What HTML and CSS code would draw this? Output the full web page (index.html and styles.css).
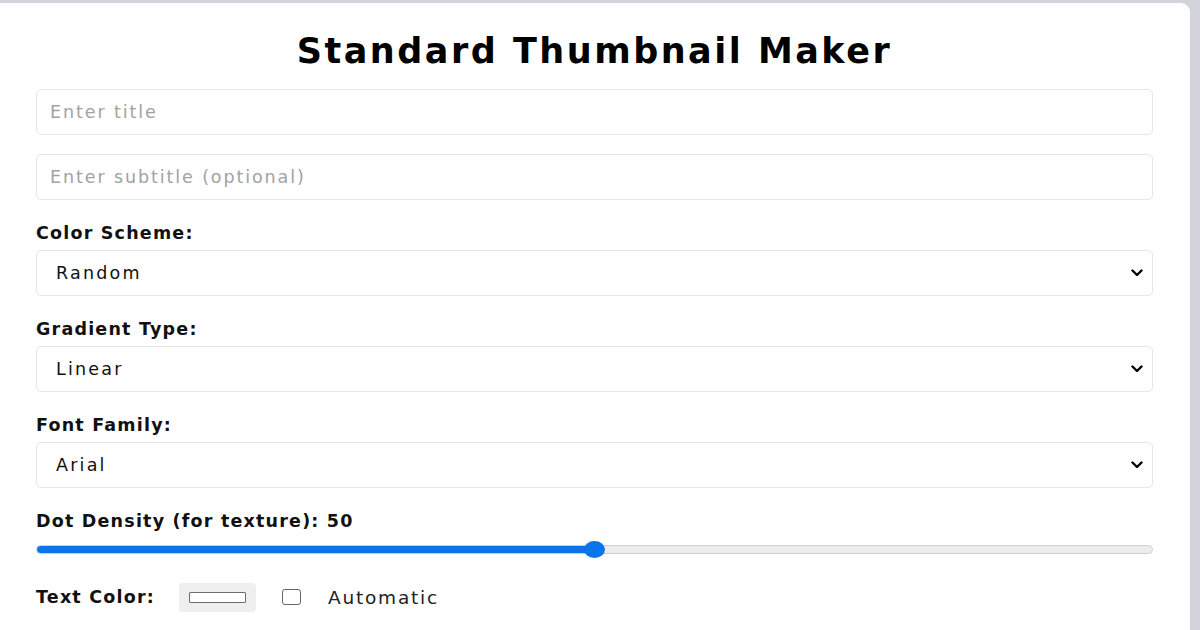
FILE: index.html
```html
<!DOCTYPE html>
<html lang="en">
<head>
<meta charset="utf-8">
<title>Standard Thumbnail Maker</title>
<link rel="stylesheet" href="styles.css">
</head>
<body>
<main class="card">
  <h1 class="title">Standard Thumbnail Maker</h1>
  <input class="text-input" type="text" placeholder="Enter title">
  <input class="text-input" type="text" placeholder="Enter subtitle (optional)">
  <div class="field">
    <label class="field-label" for="scheme">Color Scheme:</label>
    <div class="select-wrap">
      <select id="scheme" class="select"><option>Random</option></select>
      <svg class="chevron" viewBox="0 0 12 8" width="12" height="8"><path d="M1.5 1.5 6 6l4.5-4.5" fill="none" stroke="#000" stroke-width="2.4" stroke-linecap="round" stroke-linejoin="round"/></svg>
    </div>
  </div>
  <div class="field">
    <label class="field-label" for="gradient">Gradient Type:</label>
    <div class="select-wrap">
      <select id="gradient" class="select"><option>Linear</option></select>
      <svg class="chevron" viewBox="0 0 12 8" width="12" height="8"><path d="M1.5 1.5 6 6l4.5-4.5" fill="none" stroke="#000" stroke-width="2.4" stroke-linecap="round" stroke-linejoin="round"/></svg>
    </div>
  </div>
  <div class="field">
    <label class="field-label" for="font">Font Family:</label>
    <div class="select-wrap">
      <select id="font" class="select"><option>Arial</option></select>
      <svg class="chevron" viewBox="0 0 12 8" width="12" height="8"><path d="M1.5 1.5 6 6l4.5-4.5" fill="none" stroke="#000" stroke-width="2.4" stroke-linecap="round" stroke-linejoin="round"/></svg>
    </div>
  </div>
  <div class="field">
    <label class="field-label" for="density">Dot Density (for texture): 50</label>
    <input id="density" class="range" type="range" min="0" max="100" value="50">
  </div>
  <div class="color-row">
    <span class="field-label inline">Text Color:</span>
    <input class="color" type="color" value="#ffffff">
    <input id="auto" class="check" type="checkbox">
    <label class="check-label" for="auto">Automatic</label>
  </div>
</main>
</body>
</html>
```

FILE: styles.css
```css
* { box-sizing: border-box; }

html, body {
  margin: 0;
  height: 100%;
  overflow: hidden;
}

body {
  background: #d3d3db;
  font-family: "DejaVu Sans", "Open Sans", sans-serif;
  color: #111;
}

.card {
  margin: 3px 10px 0 0;
  width: 1190px;
  height: 640px;
  background: #fff;
  border-radius: 0 9px 0 0;
  padding: 29px 37px 0 36px;
  display: flex;
  flex-direction: column;
  gap: 19px;
}

.title {
  margin: 0;
  font-size: 35px;
  line-height: 38px;
  font-weight: 700;
  letter-spacing: 2.5px;
  text-align: center;
  color: #000;
}

.text-input {
  height: 46px;
  width: 100%;
  border: 1px solid #e6e6e6;
  border-radius: 5px;
  padding: 0 13px;
  font-family: inherit;
  font-size: 17.5px;
  letter-spacing: 1.9px;
  color: #111;
  outline: none;
}

.text-input::placeholder { color: #a2a2a2; }

.field {
  display: flex;
  flex-direction: column;
  gap: 5px;
}

.field-label {
  padding-top: 2px;
  font-size: 17.5px;
  line-height: 24px;
  font-weight: 600;
  letter-spacing: 1.2px;
  color: #111;
}

.select-wrap {
  position: relative;
}

.select {
  appearance: none;
  -webkit-appearance: none;
  width: 100%;
  height: 46px;
  border: 1px solid #e6e6e6;
  border-radius: 5px;
  background: #fff;
  padding: 0 40px 0 19px;
  font-family: inherit;
  font-size: 17.5px;
  letter-spacing: 2.2px;
  color: #111;
  outline: none;
}

.chevron {
  position: absolute;
  right: 10px;
  top: 19px;
  pointer-events: none;
}

.range {
  -webkit-appearance: none;
  appearance: none;
  width: 100%;
  height: 22px;
  margin: 0;
  background: transparent;
}

.range::-webkit-slider-runnable-track {
  height: 9px;
  border-radius: 5px;
  border: 1px solid #cfcfcf;
  background: linear-gradient(to right, #0c74ea 0%, #0c74ea 50%, #ececec 50%, #ececec 100%);
}

.range::-webkit-slider-thumb {
  -webkit-appearance: none;
  width: 21px;
  height: 17px;
  border-radius: 50%;
  background: #0c74ea;
  margin-top: -5px;
  border: none;
}

.color-row {
  display: flex;
  align-items: center;
  margin-top: 3px;
  height: 30px;
}

.field-label.inline {
  padding-top: 0;
  margin-right: 24px;
}

.color {
  -webkit-appearance: none;
  appearance: none;
  width: 77px;
  height: 29px;
  border: none;
  border-radius: 4px;
  background: #efefef;
  padding: 9px 10px;
  margin: 0 26px 0 0;
}

.color::-webkit-color-swatch-wrapper { padding: 0; }
.color::-webkit-color-swatch {
  border: 1.5px solid #6d6d6d;
  border-radius: 1px;
}

.check {
  -webkit-appearance: none;
  appearance: none;
  width: 19px;
  height: 16px;
  margin: 0 27px 0 0;
  border: 1.5px solid #666;
  border-radius: 3px;
  background: #fff;
}

.check-label {
  font-size: 18.5px;
  letter-spacing: 1.8px;
  color: #222;
}
```
